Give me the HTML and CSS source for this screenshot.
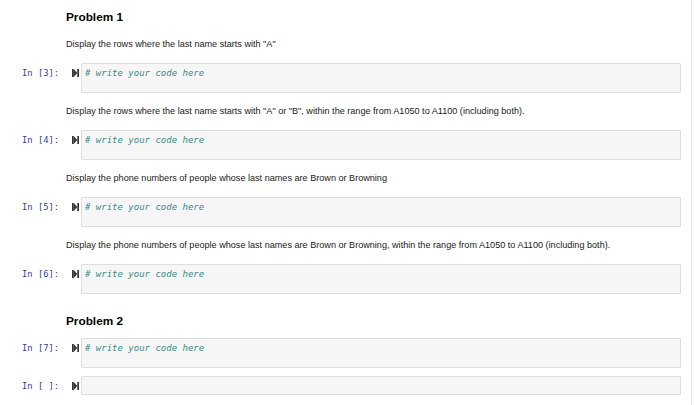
FILE: index.html
```html
<!DOCTYPE html>
<html>
<head>
<meta charset="utf-8">
<link rel="stylesheet" href="styles.css">
</head>
<body>
<div class="notebook">
  <div class="md heading first">Problem 1</div>
  <div class="md desc d1">Display the rows where the last name starts with "A"</div>
  <div class="row">
    <div class="prompt">In [3]:</div>
    <div class="run"><svg width="7" height="8" viewBox="0 0 7 8"><rect x="0" y="0" width="1.7" height="8" fill="#333"/><polygon points="1.7,0 5.3,4 1.7,8" fill="#333"/><rect x="5.3" y="0" width="1.7" height="8" fill="#333"/></svg></div>
    <div class="cell"><div class="code"><span class="c"># write your code here</span><br>&nbsp;</div></div>
  </div>
  <div class="md desc">Display the rows where the last name starts with "A" or "B", within the range from A1050 to A1100 (including both).</div>
  <div class="row">
    <div class="prompt">In [4]:</div>
    <div class="run"><svg width="7" height="8" viewBox="0 0 7 8"><rect x="0" y="0" width="1.7" height="8" fill="#333"/><polygon points="1.7,0 5.3,4 1.7,8" fill="#333"/><rect x="5.3" y="0" width="1.7" height="8" fill="#333"/></svg></div>
    <div class="cell"><div class="code"><span class="c"># write your code here</span><br>&nbsp;</div></div>
  </div>
  <div class="md desc">Display the phone numbers of people whose last names are Brown or Browning</div>
  <div class="row">
    <div class="prompt">In [5]:</div>
    <div class="run"><svg width="7" height="8" viewBox="0 0 7 8"><rect x="0" y="0" width="1.7" height="8" fill="#333"/><polygon points="1.7,0 5.3,4 1.7,8" fill="#333"/><rect x="5.3" y="0" width="1.7" height="8" fill="#333"/></svg></div>
    <div class="cell"><div class="code"><span class="c"># write your code here</span><br>&nbsp;</div></div>
  </div>
  <div class="md desc">Display the phone numbers of people whose last names are Brown or Browning, within the range from A1050 to A1100 (including both).</div>
  <div class="row">
    <div class="prompt">In [6]:</div>
    <div class="run"><svg width="7" height="8" viewBox="0 0 7 8"><rect x="0" y="0" width="1.7" height="8" fill="#333"/><polygon points="1.7,0 5.3,4 1.7,8" fill="#333"/><rect x="5.3" y="0" width="1.7" height="8" fill="#333"/></svg></div>
    <div class="cell"><div class="code"><span class="c"># write your code here</span><br>&nbsp;</div></div>
  </div>
  <div class="md heading second">Problem 2</div>
  <div class="row r5">
    <div class="prompt">In [7]:</div>
    <div class="run"><svg width="7" height="8" viewBox="0 0 7 8"><rect x="0" y="0" width="1.7" height="8" fill="#333"/><polygon points="1.7,0 5.3,4 1.7,8" fill="#333"/><rect x="5.3" y="0" width="1.7" height="8" fill="#333"/></svg></div>
    <div class="cell"><div class="code"><span class="c"># write your code here</span><br>&nbsp;</div></div>
  </div>
  <div class="row r6">
    <div class="prompt">In [ ]:</div>
    <div class="run"><svg width="7" height="8" viewBox="0 0 7 8"><rect x="0" y="0" width="1.7" height="8" fill="#333"/><polygon points="1.7,0 5.3,4 1.7,8" fill="#333"/><rect x="5.3" y="0" width="1.7" height="8" fill="#333"/></svg></div>
    <div class="cell"><div class="code">&nbsp;</div></div>
  </div>
</div>
</body>
</html>
```
FILE: styles.css
```css
html, body {
  margin: 0;
  padding: 0;
  background: #fff;
}
.notebook {
  width: 692px;
  height: 405px;
  box-sizing: border-box;
  border-right: 1px solid #ececec;
  display: flex;
  flex-direction: column;
  font-family: "Liberation Sans", Arial, sans-serif;
  color: #1a1a1a;
}
.md {
  padding-left: 66px;
}
.heading {
  font-size: 11.8px;
  font-weight: bold;
  line-height: 15px;
  color: #000;
}
.heading.first {
  margin-top: 10px;
}
.heading.second {
  margin-top: 20px;
}
.desc {
  font-size: 9.1px;
  line-height: 11px;
  margin-top: 13px;
}
.desc.d1 {
  margin-top: 14px;
}
.row {
  display: flex;
  align-items: flex-start;
  margin-top: 13px;
}
.row.r5 {
  margin-top: 9px;
}
.row.r6 {
  margin-top: 8px;
}
.prompt {
  width: 70px;
  box-sizing: border-box;
  padding-left: 22px;
  padding-top: 5px;
  font-family: "DejaVu Sans Mono", "Liberation Mono", monospace;
  font-size: 8.8px;
  line-height: 11px;
  color: #303f9f;
  white-space: pre;
}
.run {
  width: 11px;
  padding-top: 6px;
  padding-left: 2px;
  box-sizing: border-box;
  display: flex;
}
.cell {
  flex: 1;
  margin-right: 10px;
  background: #f6f6f6;
  border: 1px solid #dedede;
  border-radius: 1px;
}
.code {
  padding: 4px 3px 2px;
  font-family: "DejaVu Sans Mono", "Liberation Mono", monospace;
  font-size: 9px;
  line-height: 11px;
  white-space: pre;
}
.c {
  color: #3d8a8a;
  font-style: italic;
}
```
